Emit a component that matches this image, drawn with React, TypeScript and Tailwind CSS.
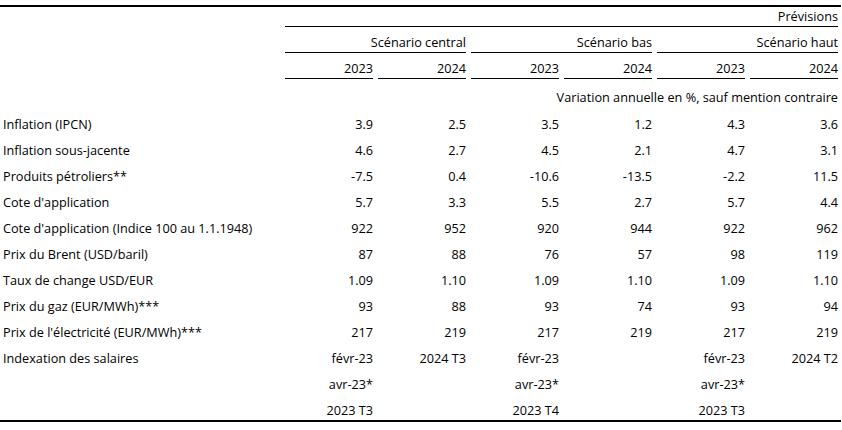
import React from 'react';

type Row = { label: string; values: string[] };

const rows: Row[] = [
  { label: 'Inflation (IPCN)', values: ['3.9', '2.5', '3.5', '1.2', '4.3', '3.6'] },
  { label: 'Inflation sous-jacente', values: ['4.6', '2.7', '4.5', '2.1', '4.7', '3.1'] },
  { label: 'Produits pétroliers**', values: ['-7.5', '0.4', '-10.6', '-13.5', '-2.2', '11.5'] },
  { label: "Cote d'application", values: ['5.7', '3.3', '5.5', '2.7', '5.7', '4.4'] },
  { label: "Cote d'application (Indice 100 au 1.1.1948)", values: ['922', '952', '920', '944', '922', '962'] },
  { label: 'Prix du Brent (USD/baril)', values: ['87', '88', '76', '57', '98', '119'] },
  { label: 'Taux de change USD/EUR', values: ['1.09', '1.10', '1.09', '1.10', '1.09', '1.10'] },
  { label: 'Prix du gaz (EUR/MWh)***', values: ['93', '88', '93', '74', '93', '94'] },
  { label: "Prix de l'électricité (EUR/MWh)***", values: ['217', '219', '217', '219', '217', '219'] },
  { label: 'Indexation des salaires', values: ['févr-23', '2024 T3', 'févr-23', '', 'févr-23', '2024 T2'] },
  { label: '', values: ['avr-23*', '', 'avr-23*', '', 'avr-23*', ''] },
  { label: '', values: ['2023 T3', '', '2023 T4', '', '2023 T3', ''] },
];

const years = ['2023', '2024', '2023', '2024', '2023', '2024'];
const scenarios = ['Scénario central', 'Scénario bas', 'Scénario haut'];

export default function App() {
  return (
    <div className="w-[842px] h-[430px] bg-white text-black text-[12.7px] font-['Open_Sans',sans-serif]">
      <div className="pt-[5px]">
        <div className="w-[841px] border-t-2 border-black">
          {/* Prévisions */}
          <div className="flex h-[20px] items-end">
            <div className="w-[280px]" />
            <div className="w-[558px] pl-[5px]">
              <div className="border-b border-black text-right leading-[17px] pb-[1px]">Prévisions</div>
            </div>
          </div>

          {/* Scénarios */}
          <div className="flex h-[26px] items-end">
            <div className="w-[280px]" />
            {scenarios.map((s) => (
              <div key={s} className="w-[186px] pl-[5px]">
                <div className="border-b border-black text-right leading-[17px] pb-[1px]">{s}</div>
              </div>
            ))}
          </div>

          {/* Années */}
          <div className="flex h-[26px] items-end">
            <div className="w-[280px]" />
            {years.map((y, i) => (
              <div key={i} className="w-[93px] pl-[5px]">
                <div className="border-b border-black text-right leading-[17px] pb-[1px]">{y}</div>
              </div>
            ))}
          </div>

          {/* Unité */}
          <div className="flex h-[29px] pt-[10px]">
            <div className="w-[838px] text-right leading-[17px]">
              Variation annuelle en %, sauf mention contraire
            </div>
          </div>

          {/* Données */}
          <div className="border-b-2 border-black">
            {rows.map((row, idx) => (
              <div key={idx} className="flex h-[26px] pt-[8px] leading-[17px]">
                <div className="w-[280px] pl-[3px] whitespace-nowrap">{row.label}</div>
                {row.values.map((v, i) => (
                  <div key={i} className="w-[93px] pl-[5px] text-right whitespace-nowrap">
                    {v}
                  </div>
                ))}
              </div>
            ))}
          </div>
        </div>
      </div>
    </div>
  );
}
